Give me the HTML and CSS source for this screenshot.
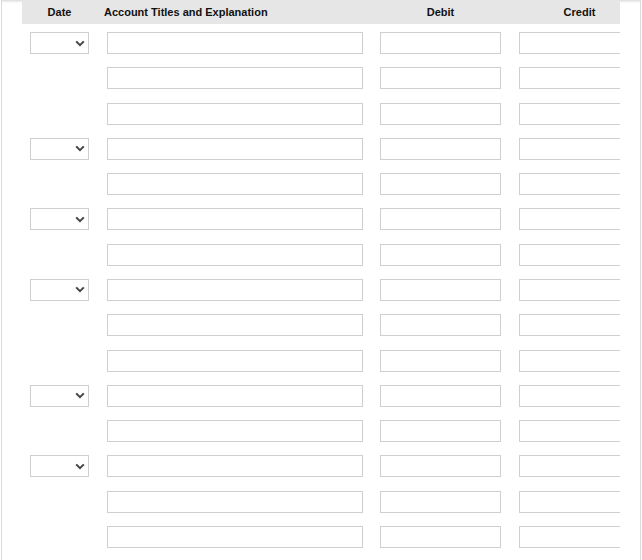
FILE: index.html
```html
<!DOCTYPE html>
<html>
<head>
<meta charset="utf-8">
<link rel="stylesheet" href="styles.css">
</head>
<body>
<div class="panel">
  <div class="viewport">
    <div class="journal">
      <div class="head">
        <div class="h-date">Date</div>
        <div class="h-acct">Account Titles and Explanation</div>
        <div class="h-num">Debit</div>
        <div class="h-num">Credit</div>
      </div>
      <div class="rows" id="rows"></div>
    </div>
  </div>
</div>
<template id="sel">
  <div class="sel"><svg class="chev" width="10" height="7" viewBox="0 0 10 7"><path d="M1.2 1.4 L5 5.2 L8.8 1.4" fill="none" stroke="#444" stroke-width="2"/></svg></div>
</template>
<script>
  var dateRows = [0,3,5,7,10,12];
  var rows = document.getElementById('rows');
  var tpl = document.getElementById('sel');
  for (var i = 0; i < 15; i++) {
    var d = document.createElement('div');
    d.className = 'cell-date';
    if (dateRows.indexOf(i) >= 0) d.appendChild(tpl.content.cloneNode(true));
    rows.appendChild(d);
    ['inp acct','inp num','inp num'].forEach(function(c){
      var e = document.createElement('div');
      e.className = c;
      rows.appendChild(e);
    });
  }
</script>
</body>
</html>
```
FILE: styles.css
```css
html, body {
  margin: 0;
  padding: 0;
  background: #fff;
}
body {
  width: 642px;
  height: 560px;
  overflow: hidden;
  font-family: "Liberation Sans", Arial, sans-serif;
}
.panel {
  margin-left: 1px;
  width: 640px;
  height: 560px;
  border-left: 1px solid #dcdcdc;
  border-right: 1px solid #dcdcdc;
  padding: 0 19px 0 20px;
  box-sizing: border-box;
  box-shadow: inset 0 3px 3px -2px rgba(0,0,0,0.18);
}
.viewport {
  width: 598px;
  height: 560px;
  overflow: hidden;
  background: linear-gradient(#e6e6e6, #e6e6e6) no-repeat 0 0 / 100% 24px;
}
.journal {
  width: 640px;
}
.head,
.rows {
  display: grid;
  grid-template-columns: 59px 256px 121px 121px;
  column-gap: 18px;
  padding-left: 8px;
}
.head {
  height: 24px;
  align-items: center;
  font-weight: bold;
  font-size: 11px;
  color: #111;
}
.head .h-date,
.head .h-num {
  text-align: center;
}
.head .h-acct {
  margin-left: -3px;
}
.head .h-num,
.rows .inp.num {
  margin-left: -1px;
  margin-right: 1px;
}
.rows {
  row-gap: 13.29px;
  padding-top: 8px;
}
.cell-date,
.inp {
  height: 22px;
}
.inp {
  border: 1px solid #cfcfcf;
  box-sizing: border-box;
  background: #fff;
}
.sel {
  height: 22px;
  width: 59px;
  box-sizing: border-box;
  border: 1px solid #cfcfcf;
  display: flex;
  align-items: center;
  justify-content: flex-end;
  padding-right: 3px;
}
.chev {
  display: block;
}
```
